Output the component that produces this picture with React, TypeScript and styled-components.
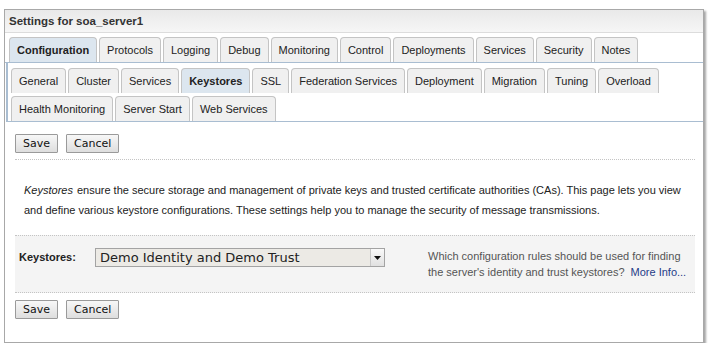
import styled, { createGlobalStyle } from 'styled-components';

const GlobalStyle = createGlobalStyle`
  body {
    margin: 0;
    background: #ffffff;
    font-family: 'Liberation Sans', Arial, sans-serif;
    color: #222;
  }
`;

const Panel = styled.div`
  margin: 9px 0 0 4px;
  width: 700px;
  height: 334px;
  border: 1px solid #a8a8a8;
  box-shadow: 2px 2px 2px rgba(0, 0, 0, 0.35);
  background: #fff;
  box-sizing: border-box;
`;

const PanelHeader = styled.div`
  height: 22px;
  display: flex;
  align-items: center;
  padding-left: 4px;
  background: linear-gradient(180deg, #e9e9e9 0%, #f6f6f6 100%);
  border-bottom: 1px solid #dcdcdc;
  font-weight: bold;
  font-size: 11.5px;
  color: #333;
`;

const TabBar = styled.div<{ $sub?: boolean }>`
  display: flex;
  flex-wrap: wrap;
  row-gap: 3px;
  column-gap: 2px;
  padding: ${(p) => (p.$sub ? '5px 0 0 3px' : '4px 0 0 4px')};
  border-bottom: 1px solid #a9bdd1;
`;

const Tab = styled.div<{ $active?: boolean }>`
  height: 24px;
  display: flex;
  align-items: center;
  padding: 0 7px;
  border: 1px solid #c4c4c4;
  border-bottom: none;
  border-radius: 4px 4px 0 0;
  background: ${(p) => (p.$active ? '#dce6ef' : '#f0f0f0')};
  font-size: 11px;
  font-weight: ${(p) => (p.$active ? 'bold' : 'normal')};
  color: #222;
  white-space: nowrap;
`;

const SubPanel = styled.div`
  margin-left: 1px;
  border-left: 2px solid #a9bdd1;
`;

const Content = styled.div`
  padding: 12px 8px 0 10px;
`;

const ButtonRow = styled.div`
  display: flex;
  gap: 8px;
`;

const Button = styled.button`
  height: 19px;
  padding: 0 7px;
  border: 1px solid #9a9a9a;
  background: linear-gradient(180deg, #f7f7f7 0%, #dedede 100%);
  font-family: 'DejaVu Sans', sans-serif;
  font-size: 11px;
  color: #111;
  border-radius: 1px;
`;

const Divider = styled.div`
  margin-top: 6px;
  border-top: 1px dotted #c4c4c4;
`;

const Description = styled.div`
  margin: 20px 0 0 9px;
  font-size: 11px;
  line-height: 20px;
  color: #222;
`;

const DescLine = styled.div`
  display: flex;
  gap: 4px;
  white-space: nowrap;
`;

const Emphasis = styled.i``;

const FieldBox = styled.div`
  margin-top: 15px;
  height: 58px;
  display: flex;
  align-items: flex-start;
  padding-top: 12px;
  box-sizing: border-box;
  background: #f4f4f4;
  border-top: 1px dotted #c4c4c4;
  border-bottom: 1px dotted #c4c4c4;
`;

const FieldLabel = styled.div`
  width: 76px;
  padding: 3px 0 0 4px;
  font-size: 11px;
  font-weight: bold;
  color: #222;
`;

const Select = styled.div`
  width: 290px;
  height: 19px;
  display: flex;
  box-sizing: border-box;
  border: 1px solid #a3a3a3;
  background: #eceae5;
`;

const SelectValue = styled.div`
  flex: 1;
  padding-left: 4px;
  display: flex;
  align-items: center;
  font-family: 'DejaVu Sans', sans-serif;
  font-size: 13px;
  color: #222;
`;

const SelectArrow = styled.div`
  width: 13px;
  display: flex;
  align-items: center;
  justify-content: center;
  border-left: 1px solid #c8c8c8;
  background: linear-gradient(180deg, #fafafa 0%, #e0e0e0 100%);
`;

const Help = styled.div`
  margin-left: 43px;
  font-size: 11px;
  line-height: 16px;
  color: #555;
`;

const MoreInfo = styled.a`
  margin-left: 6px;
  color: #1f3c88;
  text-decoration: none;
`;

const BottomButtons = styled(ButtonRow)`
  margin-top: 7px;
`;

const mainTabs = ['Configuration', 'Protocols', 'Logging', 'Debug', 'Monitoring', 'Control', 'Deployments', 'Services', 'Security', 'Notes'];
const subTabs = ['General', 'Cluster', 'Services', 'Keystores', 'SSL', 'Federation Services', 'Deployment', 'Migration', 'Tuning', 'Overload', 'Health Monitoring', 'Server Start', 'Web Services'];

export default function App() {
  return (
    <>
      <GlobalStyle />
      <Panel>
        <PanelHeader>Settings for soa_server1</PanelHeader>
        <TabBar>
          {mainTabs.map((t) => (
            <Tab key={t} $active={t === 'Configuration'}>{t}</Tab>
          ))}
        </TabBar>
        <SubPanel>
          <TabBar $sub>
            {subTabs.map((t) => (
              <Tab key={t} $active={t === 'Keystores'}>{t}</Tab>
            ))}
          </TabBar>
        </SubPanel>
        <Content>
          <ButtonRow>
            <Button>Save</Button>
            <Button>Cancel</Button>
          </ButtonRow>
          <Divider />
          <Description>
            <DescLine>
              <Emphasis>Keystores</Emphasis>
              <span>ensure the secure storage and management of private keys and trusted certificate authorities (CAs). This page lets you view</span>
            </DescLine>
            <DescLine>and define various keystore configurations. These settings help you to manage the security of message transmissions.</DescLine>
          </Description>
          <FieldBox>
            <FieldLabel>Keystores:</FieldLabel>
            <Select>
              <SelectValue>Demo Identity and Demo Trust</SelectValue>
              <SelectArrow>
                <svg width="7" height="4" viewBox="0 0 7 4">
                  <path d="M0 0 H7 L3.5 4 Z" fill="#111" />
                </svg>
              </SelectArrow>
            </Select>
            <Help>
              Which configuration rules should be used for finding
              <br />
              the server's identity and trust keystores?<MoreInfo href="#">More Info...</MoreInfo>
            </Help>
          </FieldBox>
          <BottomButtons>
            <Button>Save</Button>
            <Button>Cancel</Button>
          </BottomButtons>
        </Content>
      </Panel>
    </>
  );
}
